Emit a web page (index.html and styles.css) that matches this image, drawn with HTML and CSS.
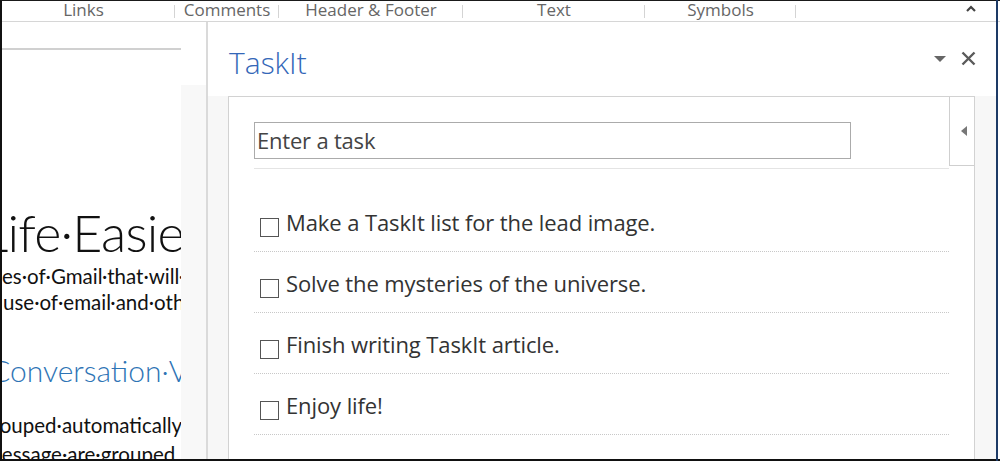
FILE: index.html
```html
<!DOCTYPE html>
<html lang="en">
<head>
<meta charset="utf-8">
<title>TaskIt</title>
<link rel="stylesheet" href="styles.css">
</head>
<body>
<div class="screen">
  <div class="ribbon">
    <div class="group g1">Links</div>
    <div class="group g2">Comments</div>
    <div class="group g3">Header &amp; Footer</div>
    <div class="group g4">Text</div>
    <div class="group g5">Symbols</div>
    <div class="group g6">
      <svg class="caret" width="10" height="7" viewBox="0 0 10 7"><path d="M1 6 L5 2 L9 6" fill="none" stroke="#444" stroke-width="2.2"/></svg>
    </div>
  </div>
  <div class="main">
    <div class="doc">
      <div class="page">
        <div class="ruler"></div>
        <div class="line t-title">Life·Easier</div>
        <div class="line t-b1">es·of·Gmail·that·will·make</div>
        <div class="line t-b2">use·of·email·and·other</div>
        <div class="line t-head">Conversation·View</div>
        <div class="line t-b3">grouped·automatically</div>
        <div class="line t-b4">message·are·grouped</div>
      </div>
      <div class="gutter"><div class="gutter-top"></div></div>
    </div>
    <div class="pane">
      <div class="pane-head">
        <div class="pane-title">TaskIt</div>
        <div class="pane-icons">
          <svg width="12" height="6" viewBox="0 0 12 6"><path d="M0 0 H12 L6 6 Z" fill="#666"/></svg>
          <svg width="15" height="15" viewBox="0 0 15 15"><path d="M1.5 1.5 L13.5 13.5 M13.5 1.5 L1.5 13.5" stroke="#5a5a5a" stroke-width="2.4"/></svg>
        </div>
      </div>
      <div class="pane-body">
        <div class="frame">
          <div class="content">
            <div class="input-wrap">
              <div class="input">Enter a task</div>
            </div>
            <ul class="tasks">
              <li class="task"><span class="box"></span><span class="label">Make a TaskIt list for the lead image.</span></li>
              <li class="task"><span class="box"></span><span class="label">Solve the mysteries of the universe.</span></li>
              <li class="task"><span class="box"></span><span class="label">Finish writing TaskIt article.</span></li>
              <li class="task"><span class="box"></span><span class="label">Enjoy life!</span></li>
            </ul>
          </div>
          <div class="side">
            <div class="tab">
              <svg width="6" height="10" viewBox="0 0 6 10"><path d="M6 0 V10 L0 5 Z" fill="#777"/></svg>
            </div>
          </div>
        </div>
      </div>
    </div>
  </div>
</div>
</body>
</html>
```

FILE: styles.css
```css
* { box-sizing: border-box; }
html, body { margin: 0; padding: 0; }
body { width: 1000px; height: 461px; overflow: hidden; background: #fff; }

.screen {
  width: 1000px;
  height: 461px;
  border-top: 1px solid #1a1a1a;
  border-left: 2px solid #111;
  border-bottom: 2px solid #111;
  display: flex;
  flex-direction: column;
  position: relative;
  background: #fff;
}
.screen::after {
  content: "";
  position: absolute;
  top: -1px;
  bottom: -2px;
  left: 994px;
  width: 2px;
  background: #1d3a66;
}

.ribbon {
  height: 21px;
  flex: none;
  display: flex;
  border-bottom: 1px solid #d6d6d6;
  font-family: "Open Sans", "Noto Sans", sans-serif;
  font-size: 17px;
  color: #666;
  line-height: 18px;
  background: #fff;
}
.group {
  position: relative;
  text-align: center;
}
.group::after {
  content: "";
  position: absolute;
  right: 0;
  top: 4px;
  height: 13px;
  width: 1px;
  background: #d4d4d4;
}
.g1 { width: 173px; padding-right: 10px; }
.g2 { width: 104px; }
.g3 { width: 184px; }
.g4 { width: 182px; }
.g5 { width: 151px; }
.g6 { flex: 1; text-align: right; padding-right: 24px; }
.g6::after { display: none; }
.caret { margin-top: 4px; vertical-align: top; }

.main {
  flex: 1;
  display: flex;
  min-height: 0;
}

.doc {
  width: 206px;
  flex: none;
  display: flex;
  border-right: 2px solid #dadada;
}
.page {
  width: 179px;
  background: #fff;
  overflow: hidden;
  font-family: "Lato", "Liberation Sans", sans-serif;
  color: #111;
  white-space: nowrap;
}
.ruler {
  height: 2px;
  margin-top: 26px;
  background: #d0d0d0;
}
.line { font-size: 20.5px; line-height: 26px; }
.t-title {
  font-weight: 300;
  font-size: 52px;
  line-height: 58px;
  margin-top: 153px;
  margin-left: -20px;
  letter-spacing: -0.8px;
  color: #111;
}
.t-b1 { margin-top: 2px; margin-left: 0; }
.t-b2 { margin-left: 1px; }
.t-head {
  font-weight: 300;
  font-size: 30px;
  line-height: 36px;
  margin-top: 37px;
  margin-left: -12px;
  color: #2e74b5;
}
.t-b3 { margin-top: 24px; margin-left: -20px; }
.t-b4 { margin-top: 3px; margin-left: -17px; }

.gutter {
  flex: 1;
  background: #f8f8f8;
}
.gutter-top { height: 63px; background: #fff; }

.pane {
  flex: 1;
  display: flex;
  flex-direction: column;
  min-width: 0;
  margin-right: 4px;
  font-family: "Open Sans", "Noto Sans", sans-serif;
}
.pane-head {
  height: 74px;
  flex: none;
  display: flex;
  justify-content: space-between;
  align-items: flex-start;
  background: #fff;
  padding: 0 20px 0 21px;
}
.pane-title {
  font-size: 30px;
  font-weight: 300;
  color: #3467b8;
  line-height: 40px;
  margin-top: 21px;
}
.pane-icons {
  display: flex;
  align-items: center;
  gap: 15px;
  margin-top: 29px;
}
.pane-icons svg:first-child { margin-top: 1px; }
.pane-body {
  flex: 1;
  background: #f7f7f7;
  padding: 0 21px 0 20px;
  display: flex;
  min-height: 0;
}
.frame {
  flex: 1;
  display: flex;
  border: 1px solid #d2d2d2;
  border-bottom: none;
  background: #fff;
}
.content {
  flex: 1;
  padding: 25px 0 0 25px;
}
.input-wrap {
  padding-bottom: 9px;
  border-bottom: 1px solid #e4e4e4;
}
.input {
  width: 597px;
  height: 37px;
  border: 1px solid #ababab;
  font-size: 22px;
  line-height: 34px;
  color: #444;
  padding-left: 2px;
  letter-spacing: -0.2px;
}
.tasks {
  list-style: none;
  margin: 0;
  padding: 22px 0 0 0;
}
.task {
  display: flex;
  align-items: flex-start;
  padding-top: 27px;
  height: 61px;
  border-bottom: 1px dotted #c8c8c8;
}
.box {
  width: 19px;
  height: 19px;
  border: 1px solid #555;
  margin-left: 6px;
  margin-right: 7px;
  flex: none;
  background: #fff;
}
.label {
  font-size: 22px;
  line-height: 26px;
  color: #333;
  margin-top: -9px;
  letter-spacing: -0.1px;
  white-space: nowrap;
}
.side {
  width: 25px;
  flex: none;
}
.tab {
  height: 69px;
  border-left: 1px solid #cfcfcf;
  border-bottom: 1px solid #cfcfcf;
  display: flex;
  align-items: center;
  justify-content: center;
  padding-right: 2px;
}
.tab svg { margin-left: 6px; }
```
